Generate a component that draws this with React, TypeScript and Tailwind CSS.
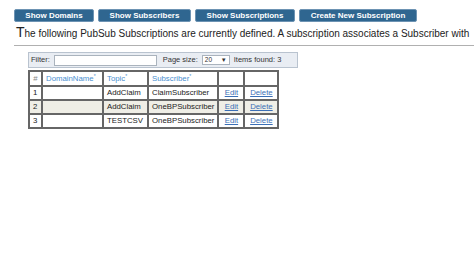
import React from "react";

const rows = [
  { n: "1", domain: "", topic: "AddClaim", sub: "ClaimSubscriber" },
  { n: "2", domain: "", topic: "AddClaim", sub: "OneBPSubscriber" },
  { n: "3", domain: "", topic: "TESTCSV", sub: "OneBPSubscriber" },
];

function Btn({ children, w }: { children: React.ReactNode; w: string }) {
  return (
    <button
      className={`h-[13px] ${w} rounded-[2px] bg-[#2f6690] border border-[#6d93b3] text-white font-bold text-[8px] leading-[11px] flex items-center justify-center`}
    >
      {children}
    </button>
  );
}

export default function App() {
  return (
    <div
      className="w-[474px] h-[276px] bg-white overflow-hidden text-[#222]"
      style={{ fontFamily: '"Liberation Sans", Arial, sans-serif' }}
    >
      <div className="pl-[14px] pt-[9px] flex gap-[4px] whitespace-nowrap">
        <Btn w="w-[80px]">Show Domains</Btn>
        <Btn w="w-[93px]">Show Subscribers</Btn>
        <Btn w="w-[100px]">Show Subscriptions</Btn>
        <Btn w="w-[118px]">Create New Subscription</Btn>
      </div>
      <div className="pl-[16px] mt-[3px] whitespace-nowrap text-[10px] leading-[14px] h-[14px] overflow-hidden">
        <span className="text-[14px]">T</span>he following PubSub Subscriptions are currently defined. A subscription associates a Subscriber with
      </div>
      <div className="ml-[14px] mt-[6px] h-px bg-[#b0b0b0]" />
      <div className="ml-[28px] mt-[6px] w-[270px] h-[16px] bg-[#e9edf3] border border-[#b9c3cf] flex items-center gap-[4px] px-[2px] text-[7.5px] text-[#333] whitespace-nowrap">
        <span>Filter:</span>
        <div className="w-[103px] h-[11px] bg-white border border-[#aab3bd]" />
        <span className="ml-[2px]">Page size:</span>
        <div className="w-[28px] h-[10px] bg-white border border-[#aab3bd] flex items-center justify-between px-[2px] text-[6.5px]">
          <span>20</span>
          <span className="text-[6px]">▼</span>
        </div>
        <span>Items found: 3</span>
      </div>
      <table className="ml-[28px] mt-[2px] border-collapse text-[7.8px] leading-[10px] whitespace-nowrap">
        <thead>
          <tr className="h-[15px]">
            <th className="border-2 border-[#666] w-[13px] font-normal text-[#888] text-center">#</th>
            <th className="border-2 border-[#666] w-[61px] font-normal text-[#4a8fd0] text-left px-[3px]">DomainName<sup className="text-[5px]">*</sup></th>
            <th className="border-2 border-[#666] w-[45px] font-normal text-[#4a8fd0] text-left px-[3px]">Topic<sup className="text-[5px]">*</sup></th>
            <th className="border-2 border-[#666] w-[70px] font-normal text-[#4a8fd0] text-left px-[3px]">Subscriber<sup className="text-[5px]">*</sup></th>
            <th className="border-2 border-[#666] w-[26px]"></th>
            <th className="border-2 border-[#666] w-[34px]"></th>
          </tr>
        </thead>
        <tbody>
          {rows.map((r, i) => (
            <tr key={r.n} className={`h-[14px] ${i === 1 ? "bg-[#efeee6]" : "bg-white"}`}>
              <td className="border-2 border-[#666] px-[3px]">{r.n}</td>
              <td className="border-2 border-[#666] px-[3px]">{r.domain}</td>
              <td className="border-2 border-[#666] px-[3px]">{r.topic}</td>
              <td className="border-2 border-[#666] px-[3px]">{r.sub}</td>
              <td className="border-2 border-[#666] text-center">
                <span className="text-[#3b6fb6] underline">Edit</span>
              </td>
              <td className="border-2 border-[#666] text-center">
                <span className="text-[#3b6fb6] underline">Delete</span>
              </td>
            </tr>
          ))}
        </tbody>
      </table>
    </div>
  );
}
